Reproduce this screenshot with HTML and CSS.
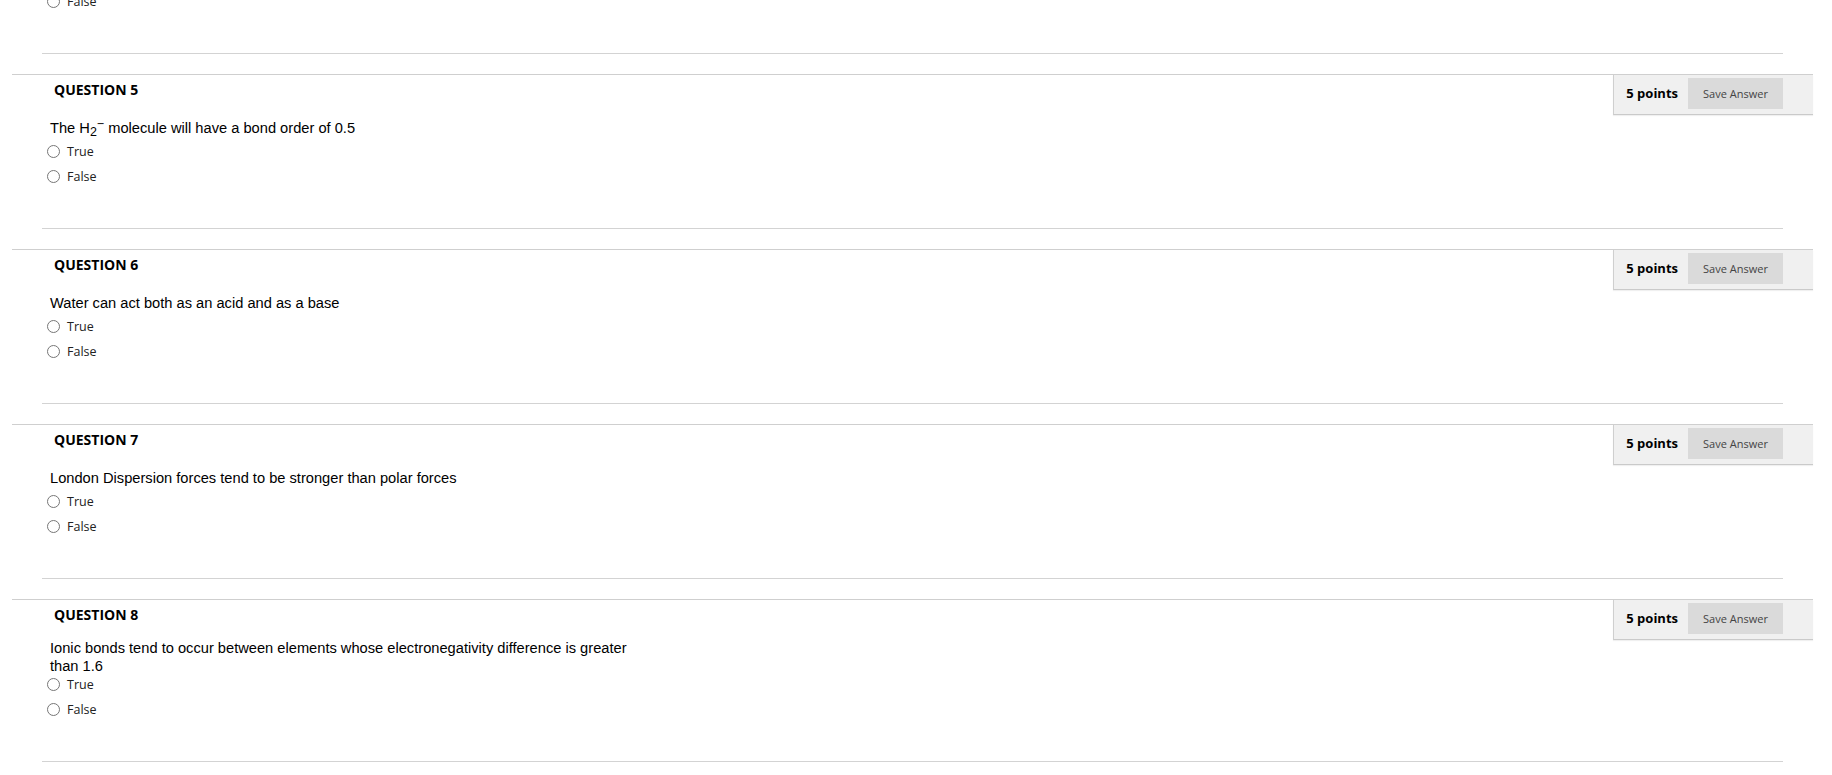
FILE: index.html
```html
<!DOCTYPE html>
<html lang="en">
<head>
<meta charset="utf-8">
<title>Test</title>
<link rel="stylesheet" href="styles.css">
</head>
<body>
<div class="page">

  <div class="question">
    <div class="q-head">
      <h3 class="q-title">QUESTION 4</h3>
      <div class="q-points"><span class="pts">5 points</span><button class="save">Save Answer</button></div>
    </div>
    <div class="q-text"><p>Covalent bonds involve the sharing of electrons</p></div>
    <ul class="options">
      <li class="option"><input class="radio" type="radio" name="q4"><span class="label">True</span></li>
      <li class="option"><input class="radio" type="radio" name="q4"><span class="label">False</span></li>
    </ul>
    <hr class="q-divider">
  </div>

  <div class="question">
    <div class="q-head">
      <h3 class="q-title">QUESTION 5</h3>
      <div class="q-points"><span class="pts">5 points</span><button class="save">Save Answer</button></div>
    </div>
    <div class="q-text"><p>The H<sub>2</sub><sup>−</sup> molecule will have a bond order of 0.5</p></div>
    <ul class="options">
      <li class="option"><input class="radio" type="radio" name="q5"><span class="label">True</span></li>
      <li class="option"><input class="radio" type="radio" name="q5"><span class="label">False</span></li>
    </ul>
    <hr class="q-divider">
  </div>

  <div class="question">
    <div class="q-head">
      <h3 class="q-title">QUESTION 6</h3>
      <div class="q-points"><span class="pts">5 points</span><button class="save">Save Answer</button></div>
    </div>
    <div class="q-text"><p>Water can act both as an acid and as a base</p></div>
    <ul class="options">
      <li class="option"><input class="radio" type="radio" name="q6"><span class="label">True</span></li>
      <li class="option"><input class="radio" type="radio" name="q6"><span class="label">False</span></li>
    </ul>
    <hr class="q-divider">
  </div>

  <div class="question">
    <div class="q-head">
      <h3 class="q-title">QUESTION 7</h3>
      <div class="q-points"><span class="pts">5 points</span><button class="save">Save Answer</button></div>
    </div>
    <div class="q-text"><p>London Dispersion forces tend to be stronger than polar forces</p></div>
    <ul class="options">
      <li class="option"><input class="radio" type="radio" name="q7"><span class="label">True</span></li>
      <li class="option"><input class="radio" type="radio" name="q7"><span class="label">False</span></li>
    </ul>
    <hr class="q-divider">
  </div>

  <div class="question">
    <div class="q-head">
      <h3 class="q-title">QUESTION 8</h3>
      <div class="q-points"><span class="pts">5 points</span><button class="save">Save Answer</button></div>
    </div>
    <div class="q-text"><p>Ionic bonds tend to occur between elements whose electronegativity difference is greater than 1.6</p></div>
    <ul class="options">
      <li class="option"><input class="radio" type="radio" name="q8"><span class="label">True</span></li>
      <li class="option"><input class="radio" type="radio" name="q8"><span class="label">False</span></li>
    </ul>
    <hr class="q-divider">
  </div>

</div>
</body>
</html>
```

FILE: styles.css
```css
html, body {
  margin: 0;
  padding: 0;
  background: #ffffff;
  overflow: hidden;
}

body {
  font-family: "Open Sans", "Liberation Sans", sans-serif;
  color: #000;
}

.page {
  margin-top: -101px;
  padding: 0 19px 0 12px;
}

.question {
  border-top: 1px solid #cfcfcf;
  padding-bottom: 20px;
}

.q-head {
  display: flex;
  justify-content: space-between;
  align-items: flex-start;
  height: 40px;
}

.q-title {
  margin: 0;
  padding: 5px 0 0 42px;
  font-size: 14px;
  font-weight: 700;
  line-height: 19px;
  color: #000;
}

.q-points {
  box-sizing: border-box;
  height: 40px;
  display: flex;
  align-items: flex-start;
  gap: 10px;
  padding: 3px 30px 0 12px;
  background: #f0f0f0;
  border-left: 1px solid #cfcfcf;
  border-bottom: 1px solid #cacaca;
  box-shadow: 0 1px 1px rgba(0, 0, 0, 0.06);
}

.pts {
  font-size: 13px;
  font-weight: 700;
  line-height: 31px;
  color: #000;
}

.save {
  width: 95px;
  height: 31px;
  padding: 0;
  border: 0;
  background: #dadada;
  font-family: "Open Sans", sans-serif;
  font-size: 11px;
  color: #444;
}

.q-text {
  box-sizing: border-box;
  margin-top: -2px;
  min-height: 29px;
  display: flex;
  align-items: center;
  padding: 1px 0 0 38px;
  font-family: "Liberation Sans", Arial, sans-serif;
  font-size: 14.67px;
  line-height: 18px;
  color: #000;
}

.q-text p {
  margin: 0;
  max-width: 595px;
}

.q-text sub {
  font-size: 0.85em;
  line-height: 0;
  vertical-align: -3px;
}

.q-text sup {
  font-size: 0.85em;
  line-height: 0;
  vertical-align: 5px;
}

.options {
  list-style: none;
  margin: 0;
  padding: 0 0 0 35px;
}

.option {
  display: flex;
  align-items: center;
  height: 19px;
}

.option + .option {
  margin-top: 6px;
}

.radio {
  appearance: none;
  -webkit-appearance: none;
  box-sizing: border-box;
  width: 13px;
  height: 13px;
  margin: 0 7px 0 0;
  border: 1px solid #767676;
  border-radius: 50%;
  background: #fff;
}

.label {
  font-size: 12.5px;
  line-height: 19px;
  color: #222;
}

.q-divider {
  margin: 42px 30px 0 30px;
  height: 0;
  border: 0;
  border-top: 1px solid #d3d3d3;
}
```
